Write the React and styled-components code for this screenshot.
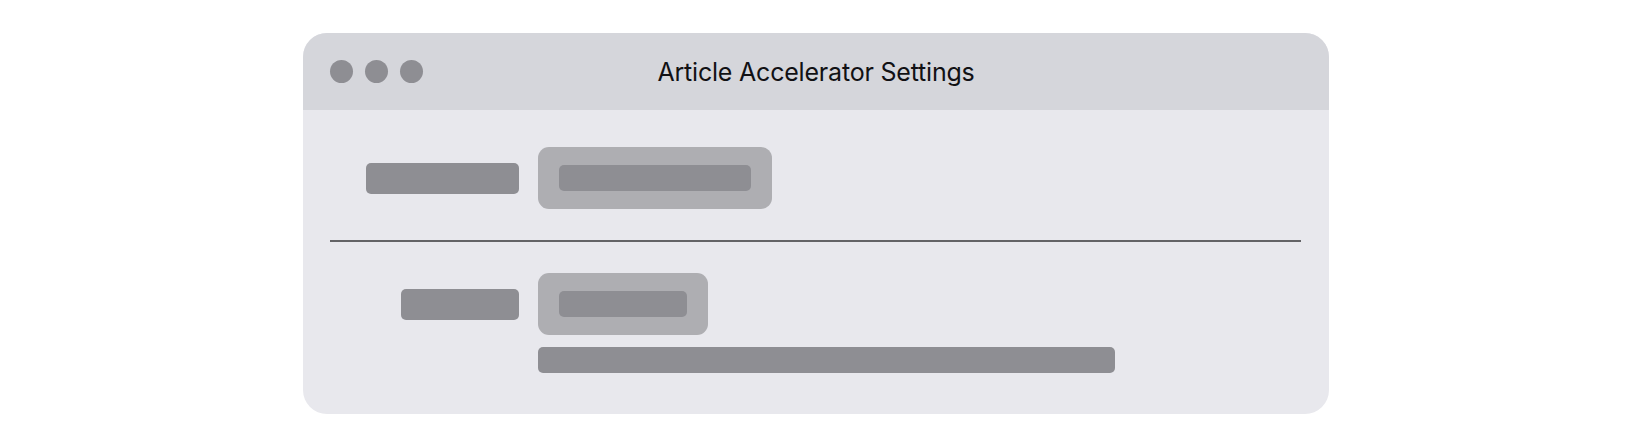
import React from "react";
import styled, { createGlobalStyle } from "styled-components";

const Global = createGlobalStyle`
  html, body { margin: 0; padding: 0; background: #ffffff; }
  body { font-family: Inter, "Noto Sans", sans-serif; }
`;

const Page = styled.div`
  width: 1632px;
  height: 448px;
  padding-top: 33px;
  box-sizing: border-box;
  display: flex;
  justify-content: center;
`;

const Window = styled.div`
  width: 1026px;
  height: 381px;
  border-radius: 24px;
  overflow: hidden;
  background: #e8e8ed;
  display: flex;
  flex-direction: column;
`;

const TitleBar = styled.div`
  height: 77px;
  flex: none;
  background: #d5d6db;
  display: grid;
  grid-template-columns: 1fr auto 1fr;
  align-items: center;
  padding: 0 27px;
`;

const Dots = styled.div`
  display: flex;
  gap: 12px;
`;

const Dot = styled.span`
  width: 23px;
  height: 23px;
  border-radius: 50%;
  background: #8e8e93;
`;

const Title = styled.div`
  font-family: Inter, "Noto Sans", sans-serif;
  font-size: 25px;
  color: #111114;
  letter-spacing: -0.2px;
  line-height: 1;
  padding-top: 2px;
`;

const Body = styled.div`
  padding: 37px 28px 41px 27px;
  display: flex;
  flex-direction: column;
`;

const Row = styled.div`
  display: grid;
  grid-template-columns: 189px auto;
  column-gap: 19px;
  row-gap: 12px;
  align-items: center;
`;

const Label = styled.div`
  justify-self: end;
  width: ${(p) => p.$w}px;
  height: 31px;
  border-radius: 5px;
  background: #8e8e93;
`;

const Field = styled.div`
  justify-self: start;
  padding: 18px 21px;
  border-radius: 11px;
  background: #aeaeb2;
`;

const FieldInner = styled.div`
  width: ${(p) => p.$w}px;
  height: 26px;
  border-radius: 5px;
  background: #8e8e93;
`;

const Hint = styled.div`
  grid-column: 2;
  width: 577px;
  height: 26px;
  border-radius: 5px;
  background: #8e8e93;
`;

const Divider = styled.hr`
  margin: 31px 0;
  border: none;
  height: 2px;
  background: #636366;
`;

export default function App() {
  return (
    <>
      <Global />
      <Page>
        <Window>
          <TitleBar>
            <Dots>
              <Dot />
              <Dot />
              <Dot />
            </Dots>
            <Title>Article Accelerator Settings</Title>
            <span />
          </TitleBar>
          <Body>
            <Row>
              <Label $w={153} />
              <Field>
                <FieldInner $w={192} />
              </Field>
            </Row>
            <Divider />
            <Row>
              <Label $w={118} />
              <Field>
                <FieldInner $w={128} />
              </Field>
              <Hint />
            </Row>
          </Body>
        </Window>
      </Page>
    </>
  );
}
